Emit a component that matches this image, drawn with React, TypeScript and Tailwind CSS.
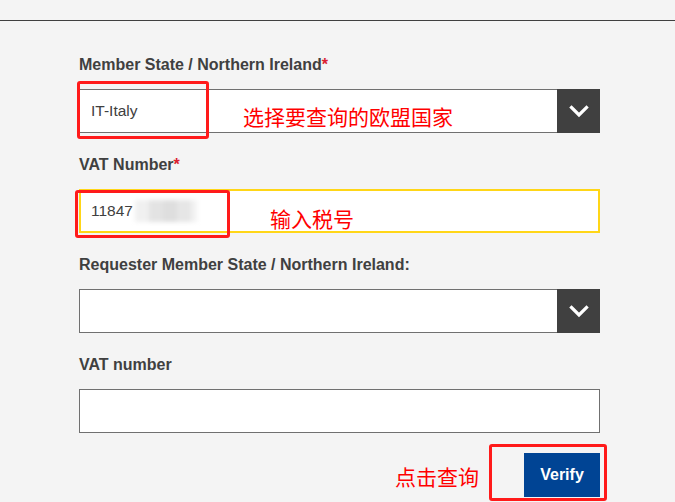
import React from "react";

const font = { fontFamily: '"Liberation Sans", Arial, sans-serif' };
const cjk = { fontFamily: '"Noto Sans CJK SC", "Liberation Sans", sans-serif' };

function Chevron() {
  return (
    <svg width="20" height="13" viewBox="0 0 20 13" fill="none">
      <polyline points="2.5,2.5 10,10 17.5,2.5" stroke="#fff" strokeWidth="3.2" strokeLinecap="square" />
    </svg>
  );
}

function Label({ text, required }: { text: string; required?: boolean }) {
  return (
    <div className="h-[18px] leading-[20px] text-[16px] font-bold text-[#404040] mb-4">
      {text}
      {required && <span className="text-[#da2131]">*</span>}
    </div>
  );
}

function Select({ value }: { value?: string }) {
  return (
    <div className="flex h-[44px] border border-[#707070] bg-white">
      <div className="flex-1 flex items-center pl-[11px] text-[15.5px] text-[#404040]">{value}</div>
      <div className="w-[43px] -my-px -mr-px bg-[#404040] flex items-center justify-center">
        <Chevron />
      </div>
    </div>
  );
}

export default function App() {
  return (
    <div className="relative w-[675px] h-[502px] bg-[#f4f4f4] overflow-hidden" style={font}>
      <div className="h-[20px]" />
      <div className="h-px bg-[#404040]" />

      <div className="w-[521px] ml-[79px] pt-[34px] flex flex-col">
        <Label text="Member State / Northern Ireland" required />
        <Select value="IT-Italy" />

        <div className="h-[22px]" />
        <Label text="VAT Number" required />
        <div className="flex h-[44px] border-2 border-[#ffd617] bg-white items-center pl-[10px] text-[15.5px] text-[#404040]">
          <span>11847</span>
          <div className="flex h-[22px] ml-[2px] blur-[2px]">
            <div className="w-[14px] bg-[#f0f0f0]" />
            <div className="w-[14px] bg-[#e3e3e3]" />
            <div className="w-[14px] bg-[#dedede]" />
            <div className="w-[14px] bg-[#e6e6e6]" />
            <div className="w-[6px] bg-[#f2f2f2]" />
          </div>
        </div>

        <div className="h-[22px]" />
        <Label text="Requester Member State / Northern Ireland:" />
        <Select />

        <div className="h-[22px]" />
        <Label text="VAT number" />
        <div className="h-[44px] border border-[#707070] bg-white" />

        <div className="flex justify-end mt-[20px]">
          <button className="w-[76px] h-[44px] bg-[#004494] text-white font-bold text-[16px]">Verify</button>
        </div>
      </div>

      {/* annotations */}
      <div className="absolute left-[77px] top-[81px] w-[132px] h-[58px] border-[3px] border-[#ff1a1a] rounded-[3px]" />
      <div className="absolute left-[75px] top-[190px] w-[155px] h-[48px] border-[3px] border-[#ff1a1a] rounded-[3px]" />
      <div className="absolute left-[489px] top-[444px] w-[118px] h-[57px] border-[3px] border-[#ff1a1a] rounded-[3px]" />

      <div className="absolute left-[243px] top-[103px] text-[21px] leading-[26px] text-[#ff0000]" style={cjk}>
        选择要查询的欧盟国家
      </div>
      <div className="absolute left-[270px] top-[205px] text-[21px] leading-[26px] text-[#ff0000]" style={cjk}>
        输入税号
      </div>
      <div className="absolute left-[395px] top-[463px] text-[21px] leading-[26px] text-[#ff0000]" style={cjk}>
        点击查询
      </div>
    </div>
  );
}
